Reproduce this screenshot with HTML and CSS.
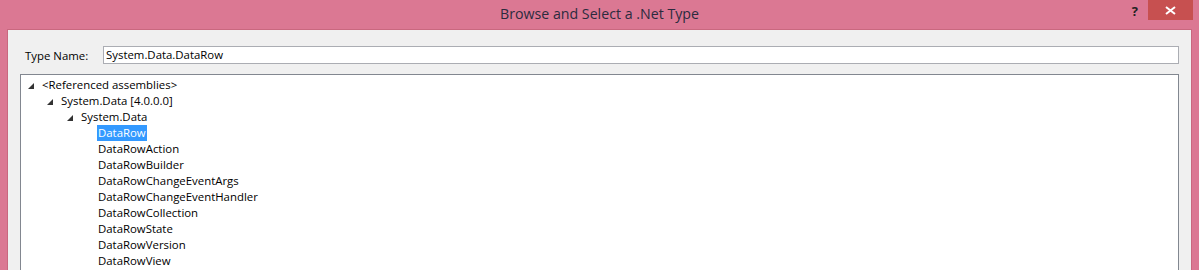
FILE: index.html
```html
<!DOCTYPE html>
<html>

<head>
    <title>Browse and Select a .Net Type</title>
    <link rel="stylesheet" href="styles.css">
</head>

<body>
    <div class="window">
        <div class="titlebar">
            <div class="title">Browse and Select a .Net Type</div>
            <div class="help">?</div>
            <div class="close">
                <svg width="11" height="9" viewBox="0 0 11 9">
                    <path d="M1 1 L10 8 M10 1 L1 8" stroke="#fff" stroke-width="2" fill="none"/>
                </svg>
            </div>
        </div>

        <div class="content">
            <div class="type-row">
                <label>Type Name:</label>
                <div class="input">System.Data.DataRow</div>
            </div>

            <div class="tree">
                <div class="node lvl0"><span class="arrow"></span><span class="text">&lt;Referenced assemblies&gt;</span></div>
                <div class="node lvl1"><span class="arrow"></span><span class="text">System.Data [4.0.0.0]</span></div>
                <div class="node lvl2"><span class="arrow"></span><span class="text">System.Data</span></div>
                <div class="node lvl3"><span class="text selected">DataRow</span></div>
                <div class="node lvl3"><span class="text">DataRowAction</span></div>
                <div class="node lvl3"><span class="text">DataRowBuilder</span></div>
                <div class="node lvl3"><span class="text">DataRowChangeEventArgs</span></div>
                <div class="node lvl3"><span class="text">DataRowChangeEventHandler</span></div>
                <div class="node lvl3"><span class="text">DataRowCollection</span></div>
                <div class="node lvl3"><span class="text">DataRowState</span></div>
                <div class="node lvl3"><span class="text">DataRowVersion</span></div>
                <div class="node lvl3"><span class="text">DataRowView</span></div>
            </div>
        </div>
    </div>
</body>

</html>
```

FILE: styles.css
```css
html, body {
    margin: 0;
    height: 100%;
    overflow: hidden;
}

body {
    background: #db7893;
    font-family: "Segoe UI", "Open Sans", "Noto Sans", sans-serif;
    font-size: 11.4px;
    color: #000;
}

.window {
    height: 100%;
    display: flex;
    flex-direction: column;
}

.titlebar {
    height: 29px;
    flex: none;
    position: relative;
    display: flex;
    justify-content: center;
    align-items: center;
}

.title {
    font-size: 14.2px;
    color: #2b2b3e;
    padding-bottom: 3px;
}

.help {
    position: absolute;
    right: 61px;
    top: 2px;
    font-size: 13px;
    font-weight: bold;
    color: #222;
}

.close {
    position: absolute;
    right: 6px;
    top: 0;
    width: 45px;
    height: 20px;
    background: #c75050;
    display: flex;
    align-items: center;
    justify-content: center;
}

.content {
    flex: 1;
    margin: 0 7px;
    background: #f0f0f0;
    border-top: 1px solid #c9687f;
    border-left: 1px solid #c9687f;
    border-right: 1px solid #c9687f;
    padding: 16px 12px 0 12px;
    display: flex;
    flex-direction: column;
}

.type-row {
    display: flex;
    align-items: center;
    height: 18px;
}

.type-row label {
    width: 78px;
    padding-left: 5px;
}

.input {
    flex: 1;
    height: 16px;
    line-height: 15px;
    border: 1px solid #abadb3;
    background: #fff;
    padding-left: 2px;
}

.tree {
    flex: 1;
    margin-top: 10px;
    background: #fff;
    border: 1px solid #828790;
    border-bottom: none;
    padding-top: 2px;
}

.node {
    height: 16px;
    line-height: 16px;
    display: flex;
    align-items: center;
    white-space: nowrap;
}

.lvl0 { padding-left: 7px; }
.lvl1 { padding-left: 26px; }
.lvl2 { padding-left: 46px; }
.lvl3 { padding-left: 76px; }

.arrow {
    width: 0;
    height: 0;
    border-left: 6px solid transparent;
    border-bottom: 6px solid #333;
    margin-right: 7px;
    margin-top: 1px;
}

.text {
    padding: 0 1px;
}

.selected {
    background: #3399ff;
    color: #fff;
}
```
